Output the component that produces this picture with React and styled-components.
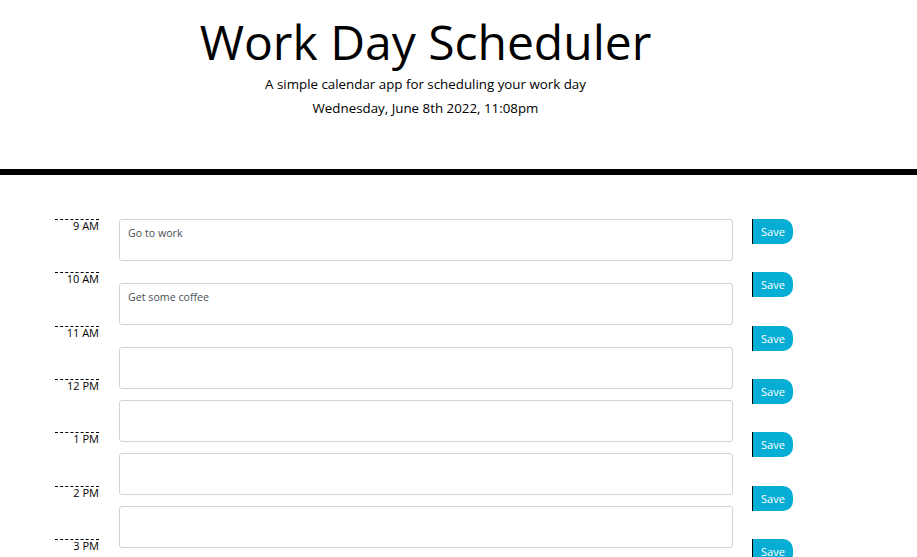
import React from "react";
import styled, { createGlobalStyle } from "styled-components";

const GlobalStyle = createGlobalStyle`
  html, body {
    margin: 0;
    padding: 0;
    background: #ffffff;
    font-family: "Open Sans", "Noto Sans", sans-serif;
    color: #000000;
  }
  * { box-sizing: border-box; }
`;

const Page = styled.div`
  width: 917px;
  height: 557px;
  overflow: hidden;
`;

const Header = styled.header`
  border-bottom: 6px solid #000000;
  height: 175px;
  padding-top: 12px;
`;

const HeaderInner = styled.div`
  width: 851px;
  text-align: center;
`;

const Title = styled.h1`
  margin: 0;
  font-size: 48px;
  font-weight: 400;
  line-height: 60px;
`;

const Lead = styled.p`
  margin: 0;
  font-size: 13.33px;
  line-height: 24px;
`;

const Board = styled.main`
  display: flex;
  align-items: flex-start;
  padding: 44px 0 0 55px;
`;

const HourColumn = styled.div`
  display: flex;
  flex-direction: column;
  width: 44px;
`;

const Hour = styled.div`
  height: 53.33px;
  border-top: 1px dashed #000000;
  text-align: right;
  font-size: 11px;
  line-height: 11px;
  color: #000000;
`;

const NoteColumn = styled.div`
  display: flex;
  flex-direction: column;
  width: 614px;
  margin-left: 20px;
`;

const Note = styled.textarea`
  display: block;
  width: 614px;
  height: 42px;
  margin: 0 0 ${(p) => p.$gap}px 0;
  padding: 6px 8px;
  border: 1px solid #ced4da;
  border-radius: 3px;
  resize: none;
  font-family: "Open Sans", "Noto Sans", sans-serif;
  font-size: 10.67px;
  line-height: 15px;
  color: #495057;
  background: #ffffff;
  outline: none;
`;

const SaveColumn = styled.div`
  display: flex;
  flex-direction: column;
  margin-left: 19px;
`;

const SaveButton = styled.button`
  width: 41px;
  height: 25px;
  margin-bottom: 28.33px;
  padding: 0;
  border: none;
  border-left: 1px solid #000000;
  border-radius: 0 10px 10px 0;
  background: #06aed5;
  color: #ffffff;
  font-family: "Open Sans", "Noto Sans", sans-serif;
  font-size: 11px;
  cursor: pointer;
`;

const slots = [
  { hour: "9 AM", text: "Go to work", gap: 22 },
  { hour: "10 AM", text: "Get some coffee", gap: 22 },
  { hour: "11 AM", text: "", gap: 11 },
  { hour: "12 PM", text: "", gap: 11 },
  { hour: "1 PM", text: "", gap: 11 },
  { hour: "2 PM", text: "", gap: 12 },
  { hour: "3 PM", text: "", gap: 11 },
];

export default function App() {
  return (
    <Page>
      <GlobalStyle />
      <Header>
        <HeaderInner>
          <Title>Work Day Scheduler</Title>
          <Lead>A simple calendar app for scheduling your work day</Lead>
          <Lead>Wednesday, June 8th 2022, 11:08pm</Lead>
        </HeaderInner>
      </Header>
      <Board>
        <HourColumn>
          {slots.map((s) => (
            <Hour key={s.hour}>{s.hour}</Hour>
          ))}
        </HourColumn>
        <NoteColumn>
          {slots.map((s) => (
            <Note key={s.hour} $gap={s.gap} defaultValue={s.text} />
          ))}
        </NoteColumn>
        <SaveColumn>
          {slots.map((s) => (
            <SaveButton key={s.hour}>Save</SaveButton>
          ))}
        </SaveColumn>
      </Board>
    </Page>
  );
}
